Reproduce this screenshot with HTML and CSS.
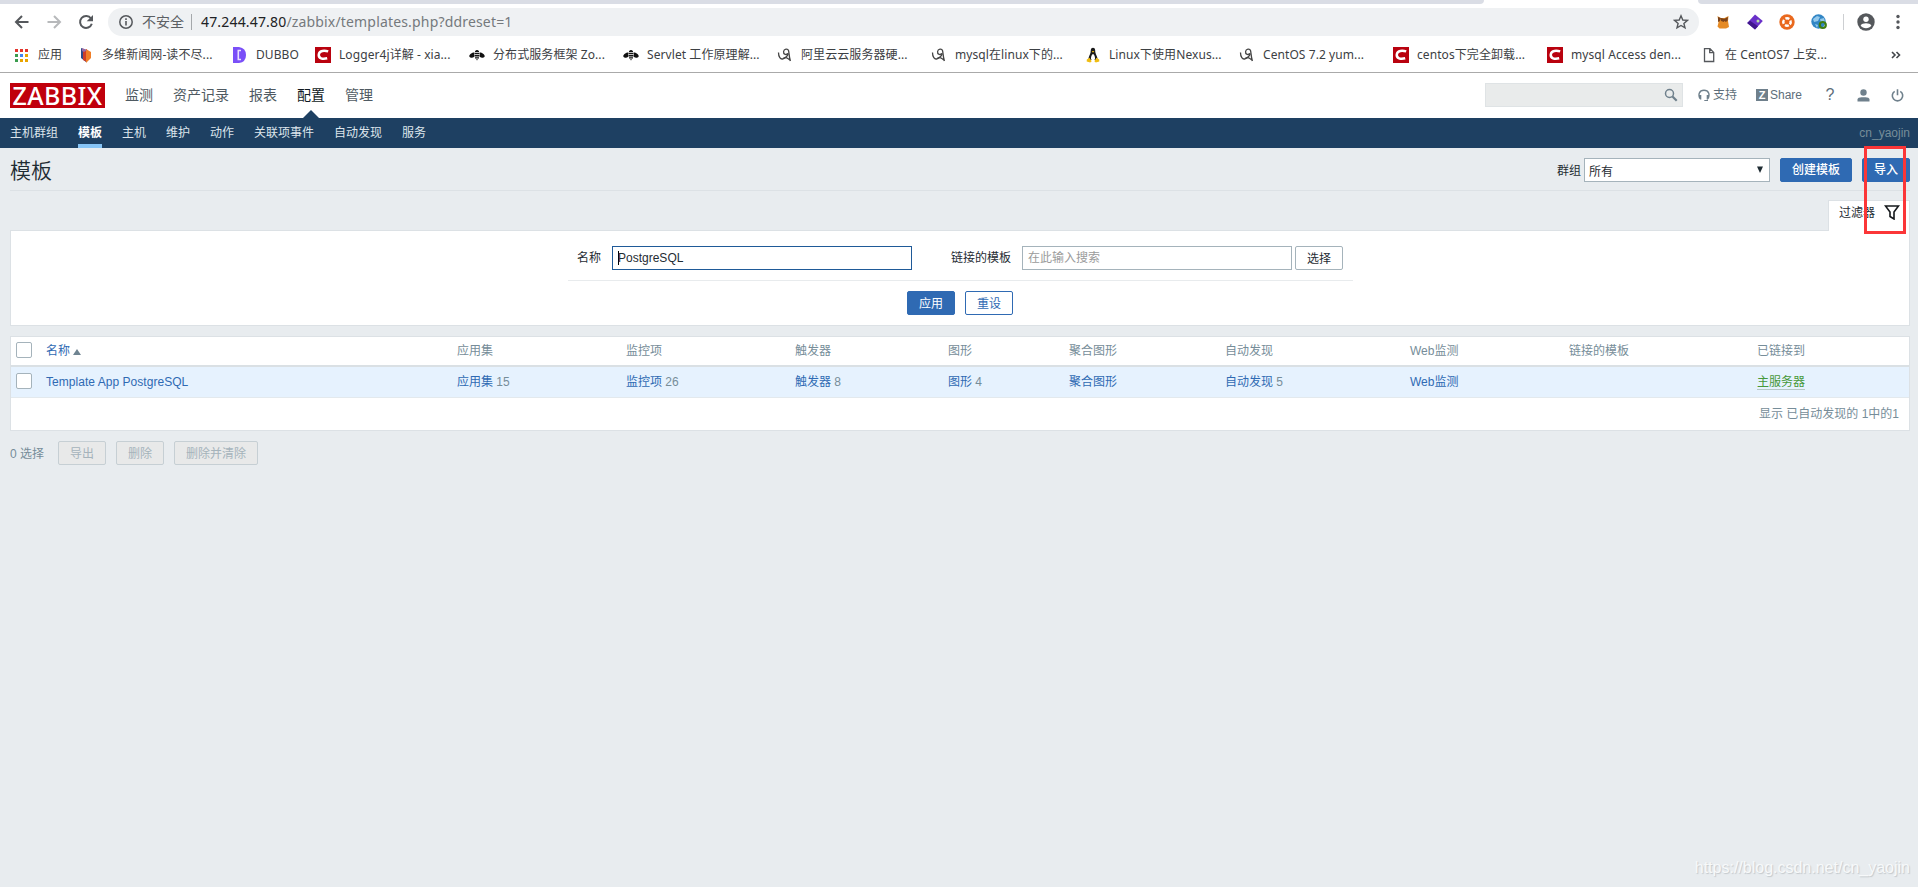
FILE: index.html
```
<!DOCTYPE html>
<html lang="zh-CN">
<head>
    <meta charset="utf-8">
    <title>模板</title>
    <link rel="stylesheet" href="styles.css">
</head>
<body>
    <svg class="defs" width="0" height="0">
        <symbol id="csdn" viewBox="0 0 16 16">
            <rect width="16" height="16" fill="#b9020f"/>
            <path d="M13.2 4.4C9.5 3.2 4.4 3.3 3.8 7.4c-.6 4.1 3.8 5 8.4 3.9" fill="none" stroke="#fff" stroke-width="2.5"/>
        </symbol>
        <symbol id="bee" viewBox="0 0 16 16">
            <path d="M6 4.2Q8 2 10 4.2V5H6zM5.5 5.8h5v1.5h-5zM5.5 8h5v1.5h-5zM6 10.2h4v1.3H6zM7 12.2h2l-1 1.3z" fill="#111"/>
            <path d="M5.200 5.600v4.200C3.600 11.200.6 10.900.3 9.200.2 7.700 3 5.600 5.200 5.600zM10.800 5.600v4.200c1.600 1.400 4.600 1.100 4.900-.6.1-1.500-2.700-3.600-4.900-3.600z" fill="#111"/>
        </symbol>
        <symbol id="cnblog" viewBox="0 0 16 16">
            <path d="M1.5 5.5C1.500 10 3.500 12.800 6 11.800 8.500 11 10.500 9 11.200 6.500" fill="none" stroke="#444" stroke-width="1.3"/>
            <path d="M11 6.600C8.500 8.600 6.300 7 6.600 4.500 7 1.800 10.800 1.200 11.600 3.800c.5 2 .3 5 1.800 10.200M6 11.500c3-1.700 4.500-.8 7.200 1.900" fill="none" stroke="#444" stroke-width="1.3"/>
        </symbol>
    </svg>

    <div class="tabstrip">
        <div class="tabs-left"></div>
        <div class="tabs-right"></div>
    </div>

    <div class="toolbar">
        <svg class="nav-icon" viewBox="0 0 16 16"><path d="M14.500 8H2.500M8 2 2 8l6 6" fill="none" stroke="#55585c" stroke-width="2"/></svg>
        <svg class="nav-icon" viewBox="0 0 16 16"><path d="M1.500 8h12M8 2l6 6-6 6" fill="none" stroke="#b7b9bb" stroke-width="2"/></svg>
        <svg class="nav-icon" viewBox="0 0 16 16"><path d="M13 4.500A6 6 0 1 0 13.800 9.800" fill="none" stroke="#55585c" stroke-width="2"/><path d="M15 1v6.300H8.700z" fill="#55585c"/></svg>
        <div class="omnibox">
            <svg width="16" height="16" viewBox="0 0 16 16"><circle cx="8" cy="8" r="6.200" fill="none" stroke="#55585c" stroke-width="1.5"/><path d="M7.200 7h1.600v4.500H7.200zM7.200 4.300h1.600v1.600H7.200z" fill="#55585c"/></svg>
            <span class="insecure">不安全</span>
            <span class="url"><b>47.244.47.80</b>/zabbix/templates.php?ddreset=1</span>
            <svg class="star" width="16" height="16" viewBox="0 0 16 16"><path d="M8 1.800l1.800 4.200 4.600.4-3.500 3 1.100 4.500L8 11.500l-4 2.400 1.100-4.500-3.500-3L6.200 6z" fill="none" stroke="#55585c" stroke-width="1.4"/></svg>
        </div>
        <div class="extensions">
            <svg width="16" height="16" viewBox="0 0 16 16"><path d="M2.500 2l3 2h4l4-2-.5 5 1 6-3 1.500H4.500l-2-2 1-4z" fill="#e58a24"/><path d="M3 3l3 1-1 3-2 1zM9 5l4-2-.5 4-2 1zM6 4l4 1-1 3-3-1z" fill="#7b431b"/></svg>
            <svg width="16" height="16" viewBox="0 0 16 16"><path d="M8 .5L15.800 7 8 15.500.2 9z" fill="#6930c9"/><path d="M.2 9L8 15.500l3-3.200L3 6.700z" fill="#40178c"/><circle cx="11" cy="7" r="1.500" fill="#b7e0a6"/></svg>
            <svg width="16" height="16" viewBox="0 0 16 16"><circle cx="8" cy="8" r="7.700" fill="#e9691e"/><circle cx="8" cy="8" r="3.700" fill="none" stroke="#fff" stroke-width="2.4" stroke-dasharray="3.9 1.912" transform="rotate(60 8 8)"/></svg>
            <svg width="16" height="16" viewBox="0 0 16 16"><circle cx="7.500" cy="7.500" r="7.200" fill="#3286c5"/><path d="M2 5l4-3 3 1-2 4-4 1zM9 5l4-1 1 4-4 1zM4 10l3 1-1 3z" fill="#94c9ec"/><circle cx="11.800" cy="11" r="3" fill="none" stroke="#3e7d12" stroke-width="2.2"/></svg>
        </div>
        <div class="toolbar-line"></div>
        <svg class="profile" width="18" height="18" viewBox="0 0 18 18"><circle cx="9" cy="9" r="8.700" fill="#55585c"/><circle cx="9" cy="6.300" r="2.700" fill="#fff"/><path d="M3.600 12.600c1.500-3 9.300-3 10.800 0-2.400 3.500-8.400 3.500-10.800 0z" fill="#fff"/></svg>
        <svg width="4" height="16" viewBox="0 0 4 16"><g fill="#55585c"><circle cx="2" cy="2.500" r="1.700"/><circle cx="2" cy="8" r="1.700"/><circle cx="2" cy="13.500" r="1.700"/></g></svg>
    </div>

    <div class="bookmarks">
        <div class="bookmark apps">
            <svg viewBox="0 0 16 16"><path d="M2 2h3v3H2zM7 2h3v3H7zM12 2h3v3h-3z" fill="#e3352d"/><path d="M2 7h3v3H2zM2 12h3v3H2z" fill="#3a9c4e"/><path d="M7 7h3v3H7z" fill="#4285f4"/><path d="M12 7h3v3h-3zM7 12h3v3H7zM12 12h3v3h-3z" fill="#e9a400"/></svg>
            <span>应用</span>
        </div>
        <div class="bookmark">
            <svg viewBox="0 0 16 16"><path d="M3 1l5 2v12l-5-4z" fill="#2c4b8c"/><path d="M5 4l4-2v13l-4-2z" fill="#cf3e28"/><path d="M8 2l5 3v6l-5 5z" fill="#ef7e28"/><path d="M4 1l5 2-3 2-2-1z" fill="#9b6ba5"/></svg>
            <span>多维新闻网-读不尽...</span>
        </div>
        <div class="bookmark dubbo">
            <svg viewBox="0 0 16 16"><path d="M1 0h6q7 1 7 8t-7 8H1z" fill="#7a4ff8"/><path d="M9 3.500H6.300v9H9" fill="none" stroke="#e9e0ff" stroke-width="1.6"/></svg>
            <span>DUBBO</span>
        </div>
        <div class="bookmark"><svg><use href="#csdn"/></svg><span>Logger4j详解 - xia...</span></div>
        <div class="bookmark"><svg><use href="#bee"/></svg><span>分布式服务框架 Zo...</span></div>
        <div class="bookmark"><svg><use href="#bee"/></svg><span>Servlet 工作原理解...</span></div>
        <div class="bookmark"><svg><use href="#cnblog"/></svg><span>阿里云云服务器硬...</span></div>
        <div class="bookmark"><svg><use href="#cnblog"/></svg><span>mysql在linux下的...</span></div>
        <div class="bookmark">
            <svg viewBox="0 0 16 16"><path d="M8 .8C5.400.8 5.900 4 5.600 5.500 5 8 3.200 9.500 3.500 13h9c.3-3.500-1.700-5-2.100-7.500C10.100 4 10.600.8 8 .8z" fill="#1b1b1b"/><path d="M8 7c-1 0-2 2.500-2 4.200S7 13.500 8 13.500s2-.6 2-2.300S9 7 8 7z" fill="#fff"/><path d="M6.800 4h2.500L8 5.800zM1.800 12.500l2.700-1.700 2.200 3.500-1.500 1.200-3.500-1zM14.200 12.500l-2.700-1.700-2.200 3.500 1.500 1.200 3.500-1z" fill="#efbd12"/></svg>
            <span>Linux下使用Nexus...</span>
        </div>
        <div class="bookmark"><svg><use href="#cnblog"/></svg><span>CentOS 7.2 yum...</span></div>
        <div class="bookmark"><svg><use href="#csdn"/></svg><span>centos下完全卸载...</span></div>
        <div class="bookmark"><svg><use href="#csdn"/></svg><span>mysql Access den...</span></div>
        <div class="bookmark">
            <svg viewBox="0 0 16 16"><path d="M3.500 1.700h5.500l3.700 3.700v9.100H3.500zM8.700 1.700v4h4" fill="none" stroke="#55585c" stroke-width="1.3"/></svg>
            <span>在 CentOS7 上安...</span>
        </div>
        <svg class="more" width="10" height="8" viewBox="0 0 10 8"><path d="M1 1l3 3-3 3M5.500 1l3 3-3 3" fill="none" stroke="#44474b" stroke-width="1.6"/></svg>
    </div>

    <header class="header">
        <div class="logo">ZABBIX</div>
        <nav class="top-nav">
            <a>监测</a>
            <a>资产记录</a>
            <a>报表</a>
            <a class="selected">配置</a>
            <a>管理</a>
        </nav>
        <div class="search">
            <svg width="14" height="14" viewBox="0 0 14 14"><circle cx="5.500" cy="5.500" r="4" fill="none" stroke="#6f808c" stroke-width="1.5"/><path d="M8.500 8.500l4.200 4.200" stroke="#6f808c" stroke-width="2.2"/></svg>
        </div>
        <a class="support">
            <svg width="12" height="13" viewBox="0 0 12 13"><path d="M2 9C0 6 1 1.200 6 1.200S12 6 10 9" fill="none" stroke="#6f808c" stroke-width="1.4"/><path d="M1 6h2.300v4.500H2.200L.8 9zM11 6H8.700v4.500h1.100L11.200 9zM6.300 11h3l.7-1.500V12H6.300z" fill="#6f808c"/></svg>
            支持
        </a>
        <a class="share"><span class="z">Z</span>Share</a>
        <a class="help">?</a>
        <svg class="user" width="13" height="13" viewBox="0 0 13 13"><circle cx="6.500" cy="3.500" r="3.200" fill="#6f808c"/><path d="M.5 12.500V10.500c0-1.600 2-2.300 4-2.300h4c2 0 4 .7 4 2.300v2z" fill="#6f808c"/></svg>
        <svg class="power" width="13" height="13" viewBox="0 0 13 13"><path d="M3.700 2.300a5.200 5.200 0 1 0 5.600 0M6.500 .3v6" fill="none" stroke="#6f808c" stroke-width="1.6"/></svg>
    </header>

    <nav class="sub-nav">
        <a>主机群组</a>
        <a class="selected">模板</a>
        <a>主机</a>
        <a>维护</a>
        <a>动作</a>
        <a>关联项事件</a>
        <a>自动发现</a>
        <a>服务</a>
        <span class="username">cn_yaojin</span>
    </nav>

    <main>
        <div class="title-row">
            <h1>模板</h1>
            <label>群组</label>
            <div class="select">所有<svg width="6" height="7" viewBox="0 0 6 7"><path d="M0 .5h6L3 7z" fill="#1f2c33"/></svg></div>
            <button class="btn">创建模板</button>
            <button class="btn">导入</button>
            <div class="mark"></div>
        </div>

        <div class="filter-tab">
            过滤器
            <svg width="16" height="15" viewBox="0 0 16 15"><path d="M1.500 1h13L10 7v7l-4-2.500V7z" fill="none" stroke="#15181b" stroke-width="1.6"/></svg>
        </div>
        <div class="filter">
            <div class="filter-form">
                <label>名称</label>
                <div class="input focused"><i></i>PostgreSQL</div>
                <label class="linked">链接的模板</label>
                <div class="input hint">在此输入搜索</div>
                <button class="btn grey">选择</button>
            </div>
            <div class="filter-buttons">
                <button class="btn">应用</button>
                <button class="btn alt">重设</button>
            </div>
        </div>

        <table class="list">
            <colgroup>
                <col class="c-check"><col class="c-name"><col class="c-apps"><col class="c-items"><col class="c-triggers"><col class="c-graphs"><col class="c-screens"><col class="c-discovery"><col class="c-web"><col class="c-linked"><col>
            </colgroup>
            <thead>
                <tr>
                    <th><span class="check"></span></th>
                    <th><a>名称</a><span class="arrow-up"></span></th>
                    <th>应用集</th>
                    <th>监控项</th>
                    <th>触发器</th>
                    <th>图形</th>
                    <th>聚合图形</th>
                    <th>自动发现</th>
                    <th>Web监测</th>
                    <th>链接的模板</th>
                    <th>已链接到</th>
                </tr>
            </thead>
            <tbody>
                <tr>
                    <td><span class="check"></span></td>
                    <td><a class="name">Template App PostgreSQL</a></td>
                    <td><a>应用集</a> 15</td>
                    <td><a>监控项</a> 26</td>
                    <td><a>触发器</a> 8</td>
                    <td><a>图形</a> 4</td>
                    <td><a>聚合图形</a></td>
                    <td><a>自动发现</a> 5</td>
                    <td><a>Web监测</a></td>
                    <td></td>
                    <td><a class="green">主服务器</a></td>
                </tr>
            </tbody>
            <tfoot>
                <tr><td colspan="11">显示 已自动发现的 1中的1</td></tr>
            </tfoot>
        </table>

        <div class="actions">
            <span>0 选择</span>
            <button class="btn disabled">导出</button>
            <button class="btn disabled">删除</button>
            <button class="btn disabled">删除并清除</button>
        </div>
    </main>

    <div class="watermark">https://blog.csdn.net/cn_yaojin</div>
</body>
</html>
```
FILE: styles.css
```
* {
    box-sizing: border-box;
}
body {
    margin: 0;
    height: 887px;
    overflow: hidden;
    position: relative;
    background: #e8ecef;
    color: #1f2c33;
    font: 12px/16px "Liberation Sans", "Noto Sans CJK SC", sans-serif;
    white-space: nowrap;
}
svg {
    display: block;
    flex: none;
}
.defs {
    position: absolute;
}

/* browser */
.tabstrip {
    display: flex;
    justify-content: space-between;
    height: 4px;
    background: #fff;
}
.tabs-left {
    width: 1484px;
    background: #dadde5;
    border-bottom-right-radius: 6px;
}
.tabs-right {
    width: 220px;
    background: #dadde5;
    border-bottom-left-radius: 6px;
}
.toolbar {
    display: flex;
    align-items: center;
    height: 36px;
    padding: 0 18px 0 14px;
    background: #fff;
}
.nav-icon {
    width: 16px;
    height: 16px;
    margin-right: 16px;
}
.omnibox {
    display: flex;
    align-items: center;
    width: 1591px;
    height: 28px;
    margin-left: -2px;
    padding: 0 10px;
    border-radius: 14px;
    background: #eff1f3;
    color: #75797d;
    font: 14px/20px "Noto Sans", "Noto Sans CJK SC", sans-serif;
}
.insecure {
    width: 50px;
    height: 16px;
    margin: 0 9px 0 8px;
    border-right: 1px solid #a5a8ab;
    color: #5c6064;
    line-height: 15px;
}
.url {
    letter-spacing: 0.17px;
}
.url b {
    font-weight: normal;
    color: #202124;
}
.star {
    margin-left: auto;
}
.extensions {
    display: flex;
    gap: 16px;
    margin-left: 16px;
}
.toolbar-line {
    width: 1px;
    height: 16px;
    margin: 0 14px 0 16px;
    background: #cdcfd2;
}
.profile {
    margin-left: -1px;
    margin-right: auto;
}
.bookmarks {
    display: flex;
    align-items: center;
    height: 33px;
    padding: 0 17px 3px 13px;
    background: #fff;
    border-bottom: 1px solid #aaa;
    color: #3c4043;
    font: 12px/16px "Noto Sans", "Noto Sans CJK SC", sans-serif;
    letter-spacing: 0.08px;
}
.bookmark {
    display: flex;
    align-items: center;
    gap: 8px;
    width: 154px;
}
.bookmark svg {
    width: 16px;
    height: 16px;
}
.bookmark.apps {
    width: 65px;
    gap: 9px;
}
.bookmark.dubbo {
    width: 83px;
}
.more {
    margin-left: auto;
}

/* zabbix header */
.header {
    display: flex;
    align-items: center;
    height: 45px;
    padding: 0 14px 0 10px;
    background: #fff;
    color: #5d6e7a;
}
.logo {
    width: 95px;
    height: 25px;
    background: #c0000c;
    color: #fff;
    font: 500 25px/24px "Noto Sans", sans-serif;
    letter-spacing: 0.4px;
    text-align: center;
}
.top-nav {
    display: flex;
    gap: 20px;
    height: 45px;
    margin-left: 20px;
    color: #4f5a62;
    font-size: 14px;
    line-height: 44px;
}
.top-nav .selected {
    position: relative;
    color: #0f1a22;
}
.top-nav .selected::after {
    content: "";
    position: absolute;
    left: 6px;
    bottom: 0;
    border: 8px solid transparent;
    border-top: 0;
    border-bottom-color: #1e4062;
}
.search {
    display: flex;
    align-items: center;
    justify-content: flex-end;
    width: 198px;
    height: 24px;
    margin: 0 0 1px auto;
    padding-right: 4px;
    background: #e9ebeb;
    border: 1px solid #dfe3e5;
}
.support {
    display: flex;
    align-items: center;
    gap: 3px;
    margin: 0 0 1px 15px;
}
.share {
    display: flex;
    align-items: center;
    gap: 2px;
    width: 47px;
    margin: 0 0 1px 19px;
}
.z {
    width: 12px;
    height: 12px;
    background: #6f808c;
    color: #fff;
    font-weight: bold;
    font-size: 11px;
    line-height: 12px;
    text-align: center;
}
.help {
    margin: 0 0 1px 22px;
    width: 10px;
    font-size: 16px;
    text-align: center;
}
.user {
    margin: 0 21px 1px 22px;
}
.power {
    margin-bottom: 1px;
}
.sub-nav {
    display: flex;
    gap: 20px;
    height: 30px;
    padding: 0 8px 0 10px;
    background: #1e4062;
    color: #dde5ec;
    line-height: 30px;
}
.sub-nav .selected {
    border-bottom: 4px solid #87c4f5;
    color: #fff;
    font-weight: bold;
}
.username {
    margin-left: auto;
    color: #768d99;
}

/* page */
main {
    padding: 0 8px 0 10px;
}
.title-row {
    position: relative;
    display: flex;
    align-items: center;
    height: 43px;
    padding-top: 2px;
    border-bottom: 1px solid #dce1e5;
}
h1 {
    margin: 0 auto 0 0;
    padding-top: 2px;
    font-size: 21px;
    font-weight: 350;
    line-height: 28px;
}
.title-row label {
    padding-top: 2px;
}
.select {
    display: flex;
    align-items: center;
    justify-content: space-between;
    width: 186px;
    height: 24px;
    margin-left: 3px;
    padding: 3px 6px 0 4px;
    background: #fff;
    border: 1px solid #a5b3bb;
}
.select svg {
    margin-bottom: 4px;
}
.btn {
    height: 24px;
    padding: 0 11px;
    border: 1px solid #2f6ab3;
    border-radius: 2px;
    background: #2f6ab3;
    color: #fff;
    font: inherit;
    line-height: 20px;
    padding-top: 1px;
}
.title-row .btn {
    margin-left: 10px;
    padding-top: 0;
    font-weight: 500;
}
.mark {
    position: absolute;
    right: 4px;
    top: -2px;
    width: 42px;
    height: 88px;
    border: 3px solid #fb3638;
    z-index: 1;
}
.filter-tab {
    display: flex;
    align-items: center;
    justify-content: space-between;
    position: relative;
    width: 82px;
    height: 31px;
    margin: 9px 0 -1px auto;
    padding: 0 9px 7px 10px;
    background: #fff;
    border: 1px solid #dce1e5;
    border-bottom: 0;
}
.filter {
    height: 96px;
    padding-top: 15px;
    background: #fff;
    border: 1px solid #dce1e5;
}
.filter-form {
    display: flex;
    align-items: center;
    width: 785px;
    height: 35px;
    margin-left: 557px;
    padding: 0 10px 10px 9px;
    border-bottom: 1px solid #e8ebed;
}
.input {
    display: flex;
    align-items: center;
    width: 270px;
    height: 24px;
    margin-left: 11px;
    padding: 0 5px;
    border: 1px solid #a5b3bb;
}
.focused {
    width: 300px;
    border-color: #1f5a98;
}
.input i {
    width: 1px;
    height: 14px;
    margin-right: -1px;
    background: #000;
}
.linked {
    margin-left: 39px;
}
.hint {
    color: #9b9b9b;
}
.grey {
    margin-left: 3px;
    background: #fff;
    border-color: #a5b3bb;
    color: #1f2c33;
}
.filter-buttons {
    display: flex;
    gap: 10px;
    justify-content: center;
    padding-top: 10px;
}
.alt {
    background: #fff;
    color: #2f6ab3;
}
.list {
    width: 100%;
    height: 95px;
    margin-top: 10px;
    table-layout: fixed;
    border-collapse: separate;
    border-spacing: 0;
    background: #fff;
    border: 1px solid #dce1e5;
    color: #768d99;
}
.c-check { width: 30px; }
.c-name { width: 411px; }
.c-apps { width: 169px; }
.c-items { width: 169px; }
.c-triggers { width: 153px; }
.c-graphs { width: 121px; }
.c-screens { width: 156px; }
.c-discovery { width: 185px; }
.c-web { width: 159px; }
.c-linked { width: 188px; }
.list th,
.list td {
    padding: 0 5px;
    text-align: left;
    font-weight: normal;
}
.list th {
    height: 30px;
    border-bottom: 2px solid #dae0e4;
}
.list tbody td {
    height: 31px;
    background: #e6f2fe;
    border-bottom: 1px solid #e3e9ed;
}
.list tfoot td {
    height: 32px;
    padding-right: 10px;
    text-align: right;
}
.list a {
    color: #2f6ab3;
}
.list a.name {
    letter-spacing: 0.04px;
}
.list a.green {
    color: #46983a;
    border-bottom: 1px solid #b5c7c5;
}
.check {
    display: block;
    width: 16px;
    height: 16px;
    margin-top: -2px;
    background: #fff;
    border: 1px solid #a5b3bb;
    border-radius: 2px;
}
.arrow-up {
    display: inline-block;
    margin-left: 3px;
    border: 4px solid transparent;
    border-top: 0;
    border-bottom: 6px solid #6f8491;
}
.actions {
    display: flex;
    align-items: center;
    gap: 10px;
    margin-top: 10px;
    color: #768d99;
}
.actions span {
    width: 38px;
    padding-top: 1px;
}
.disabled {
    background: #e8e9e9;
    border-color: #c6cfd4;
    color: #a5b3bb;
}
.watermark {
    position: absolute;
    right: 8px;
    bottom: 8px;
    color: #f7f9fa;
    font-size: 16px;
    line-height: 22px;
    text-shadow: 1px 1px 1px #c3c8cc;
}
```
